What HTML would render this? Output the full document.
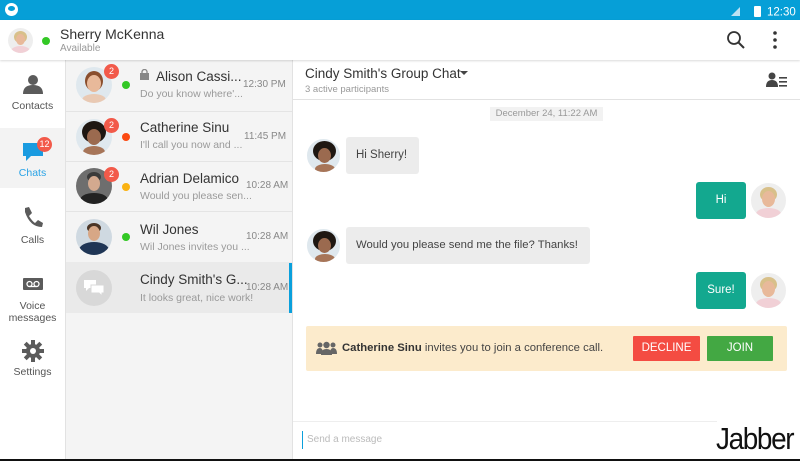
<!DOCTYPE html>
<html><head><meta charset="utf-8"><style>
*{margin:0;padding:0;box-sizing:border-box}
body{width:800px;height:461px;overflow:hidden;background:#fff;font-family:"Liberation Sans",sans-serif;position:relative;color:#333}
.a{position:absolute}
.t{position:absolute;white-space:nowrap}
.av{position:absolute;border-radius:50%;overflow:hidden;background:#dfe8ee}
.av .hair{position:absolute;border-radius:50%}
.av .face{position:absolute;border-radius:50%;background:#e8b99a}
.av .body{position:absolute;border-radius:50% 50% 0 0}
.badge{position:absolute;width:15px;height:15px;border-radius:50%;background:#f25a4a;color:#fff;font-size:9px;text-align:center;line-height:15px}
.dot{position:absolute;width:8px;height:8px;border-radius:50%}
.nm{font-size:13.5px;color:#333}
.pv{font-size:10.5px;color:#9a9a9a}
.tm{font-size:10px;color:#888}
.nav{position:absolute;left:0;width:65px;text-align:center;font-size:10.5px;color:#555}
</style></head><body>
<div class="a" style="left:0;top:0;width:800px;height:20px;background:#069fd7"></div>
<div class="a" style="left:5px;top:3px;width:13px;height:13px;border-radius:50%;background:#fff"></div>
<div class="a" style="left:8px;top:6px;width:7px;height:5px;border-radius:50%;background:#069fd7"></div>
<svg class="a" style="left:730px;top:4px" width="70" height="14"><polygon points="1,12 10,3 10,12" fill="#bde2f3"/><rect x="24" y="2" width="7" height="11" rx="1" fill="#fff"/><text x="37" y="11.5" font-size="11.5" fill="#fff" font-family="Liberation Sans">12:30</text></svg>
<div class="a" style="left:0;top:20px;width:800px;height:40px;background:#fff;box-shadow:0 1px 2px rgba(0,0,0,.15);z-index:2"></div>
<div style="z-index:3;position:absolute;left:0;top:0">
<div class="av" style="left:8px;top:28px;width:25px;height:25px;background:#eee"><div class="hair" style="left:6px;top:3px;width:13px;height:12px;background:#d8c08a"></div><div class="face" style="left:8px;top:6px;width:9px;height:11px"></div><div class="body" style="left:3px;top:18px;width:19px;height:10px;background:#f1d0d6"></div></div>
<div class="dot" style="left:42px;top:37px;background:#33c825"></div>
<div class="t" style="left:60px;top:26px;font-size:14px;color:#333">Sherry McKenna</div>
<div class="t" style="left:60px;top:43px;font-size:10px;color:#999">Available</div>
<svg class="a" style="left:725px;top:29px" width="60" height="22"><circle cx="9" cy="9" r="6" fill="none" stroke="#333" stroke-width="1.8"/><line x1="13.5" y1="13.5" x2="19" y2="19" stroke="#333" stroke-width="2"/><circle cx="50" cy="4" r="1.8" fill="#333"/><circle cx="50" cy="11" r="1.8" fill="#333"/><circle cx="50" cy="18" r="1.8" fill="#333"/></svg>
</div>
<div class="a" style="left:0;top:128px;width:65px;height:60px;background:#f3f3f3"></div>
<svg class="a" style="left:22px;top:74px" width="22" height="22"><circle cx="11" cy="6" r="5" fill="#5b5b5b"/><path d="M1 20 Q1 11 11 11 Q21 11 21 20Z" fill="#5b5b5b"/></svg>
<div class="nav" style="top:100px">Contacts</div>
<svg class="a" style="left:22px;top:141px" width="22" height="22"><path d="M1 2 H21 V15 H9 L4 20 V15 H1Z" fill="#1a9be0"/></svg>
<div class="badge" style="left:37px;top:137px">12</div>
<div class="nav" style="top:167px;color:#29a3e6">Chats</div>
<svg class="a" style="left:22px;top:206px" width="22" height="22"><path d="M3 2 L7 1 L10 7 L7 10 Q10 15 13 17 L16 14 L21 17 L20 21 Q8 21 3 6Z" fill="#5b5b5b"/></svg>
<div class="nav" style="top:234px">Calls</div>
<svg class="a" style="left:23px;top:278px" width="20" height="12"><rect width="20" height="12" rx="1" fill="#5b5b5b"/><circle cx="6.5" cy="6" r="2.5" fill="none" stroke="#fff" stroke-width="1.3"/><circle cx="13.5" cy="6" r="2.5" fill="none" stroke="#fff" stroke-width="1.3"/><line x1="6.5" y1="8.5" x2="13.5" y2="8.5" stroke="#fff" stroke-width="1.3"/></svg>
<div class="nav" style="top:300px;line-height:12px">Voice<br>messages</div>
<svg class="a" style="left:22px;top:340px" width="22" height="22"><g fill="#5b5b5b" transform="translate(11 11)"><rect x="-2" y="-11" width="4" height="22"/><rect x="-2" y="-11" width="4" height="22" transform="rotate(45)"/><rect x="-2" y="-11" width="4" height="22" transform="rotate(90)"/><rect x="-2" y="-11" width="4" height="22" transform="rotate(135)"/><circle r="7"/><circle r="3" fill="#fff"/></g></svg>
<div class="nav" style="top:366px">Settings</div>
<div class="a" style="left:65px;top:60px;width:228px;height:401px;background:#f4f4f4;border-left:1px solid #e2e2e2;border-right:1px solid #e2e2e2"></div>
<div class="a" style="left:66px;top:111px;width:226px;height:1px;background:#e4e4e4"></div>
<div class="a" style="left:66px;top:161px;width:226px;height:1px;background:#e4e4e4"></div>
<div class="a" style="left:66px;top:211px;width:226px;height:1px;background:#e4e4e4"></div>
<div class="a" style="left:66px;top:262px;width:226px;height:51px;background:#eaeaea"></div>
<div class="a" style="left:289px;top:263px;width:3px;height:50px;background:#0aa0dc"></div>
<div class="av" style="left:76px;top:67px;width:36px;height:36px"><div class="hair" style="left:9px;top:4px;width:18px;height:20px;background:#8a4f2e"></div><div class="face" style="left:11px;top:8px;width:14px;height:17px"></div><div class="body" style="left:6px;top:27px;width:24px;height:12px;background:#e9c9b3"></div></div>
<div class="badge" style="left:104px;top:64px">2</div><div class="dot" style="left:122px;top:81px;background:#33c825"></div>
<svg class="a" style="left:140px;top:69px" width="10" height="11"><rect x="0" y="4" width="9" height="7" fill="#888"/><path d="M2 5V3a2.5 2.5 0 015 0v2" fill="none" stroke="#888" stroke-width="1.3"/></svg>
<div class="t nm" style="left:156px;top:69px">Alison Cassi...</div><div class="t pv" style="left:140px;top:88px">Do you know where'...</div><div class="t tm" style="left:243px;top:79px">12:30 PM</div>
<div class="av" style="left:76px;top:119px;width:36px;height:36px"><div class="hair" style="left:6px;top:2px;width:24px;height:22px;background:#1e1712"></div><div class="face" style="left:11px;top:10px;width:14px;height:16px;background:#9b6a4f"></div><div class="body" style="left:7px;top:27px;width:22px;height:12px;background:#a77558"></div></div>
<div class="badge" style="left:104px;top:118px">2</div><div class="dot" style="left:122px;top:133px;background:#fb4a12"></div>
<div class="t nm" style="left:140px;top:120px">Catherine Sinu</div><div class="t pv" style="left:140px;top:139px">I'll call you now and ...</div><div class="t tm" style="left:244px;top:131px">11:45 PM</div>
<div class="av" style="left:76px;top:168px;width:36px;height:36px;background:#6e6e6e"><div class="hair" style="left:11px;top:4px;width:14px;height:10px;background:#3a3a3a"></div><div class="face" style="left:12px;top:8px;width:12px;height:15px;background:#d3a98f"></div><div class="body" style="left:4px;top:25px;width:28px;height:14px;background:#222"></div></div>
<div class="badge" style="left:104px;top:167px">2</div><div class="dot" style="left:122px;top:183px;background:#fab212"></div>
<div class="t nm" style="left:140px;top:171px">Adrian Delamico</div><div class="t pv" style="left:140px;top:190px">Would you please sen...</div><div class="t tm" style="left:246px;top:180px">10:28 AM</div>
<div class="av" style="left:76px;top:219px;width:36px;height:36px;background:#cfd9e1"><div class="hair" style="left:11px;top:4px;width:14px;height:10px;background:#4a3526"></div><div class="face" style="left:12px;top:7px;width:12px;height:15px;background:#d7a786"></div><div class="body" style="left:3px;top:23px;width:30px;height:16px;background:#1f3555"></div></div>
<div class="dot" style="left:122px;top:233px;background:#33c825"></div>
<div class="t nm" style="left:140px;top:222px">Wil Jones</div><div class="t pv" style="left:140px;top:241px">Wil Jones invites you ...</div><div class="t tm" style="left:246px;top:231px">10:28 AM</div>
<div class="a" style="left:76px;top:270px;width:36px;height:36px;border-radius:50%;background:#d8d8d8"></div>
<svg class="a" style="left:83px;top:279px" width="22" height="18"><path d="M1 1H13V9H6L3 12V9H1Z" fill="#fff"/><path d="M8 6H21V14H19V17L16 14H8Z" fill="#fff" stroke="#d8d8d8" stroke-width="1"/></svg>
<div class="t nm" style="left:140px;top:272px">Cindy Smith's G...</div><div class="t pv" style="left:140px;top:292px">It looks great, nice work!</div><div class="t tm" style="left:246px;top:282px">10:28 AM</div>
<div class="t" style="left:305px;top:66px;font-size:13.5px;color:#333">Cindy Smith's Group Chat</div>
<svg class="a" style="left:460px;top:71px" width="9" height="5"><path d="M0 0H8L4 4Z" fill="#444"/></svg>
<div class="t" style="left:305px;top:84px;font-size:9.5px;color:#999">3 active participants</div>
<svg class="a" style="left:766px;top:72px" width="22" height="16"><circle cx="6" cy="4" r="3.5" fill="#444"/><path d="M0 15Q0 8 6 8Q12 8 12 15Z" fill="#444"/><rect x="13" y="5" width="8" height="1.6" fill="#444"/><rect x="13" y="9" width="8" height="1.6" fill="#444"/><rect x="13" y="13" width="8" height="1.6" fill="#444"/></svg>
<div class="a" style="left:293px;top:99px;width:507px;height:1px;background:#e2e2e2"></div>
<div class="t" style="left:490px;top:107px;width:113px;height:14px;background:#f2f2f2;font-size:9.5px;color:#999;text-align:center;line-height:14px">December 24, 11:22 AM</div>
<div class="a" style="left:346px;top:137px;width:73px;height:37px;background:#ececec;border-radius:3px"></div>
<div class="t" style="left:356px;top:149px;font-size:11.5px;color:#444">Hi Sherry!</div>
<div class="av" style="left:305px;top:137px;width:37px;height:37px;border:2px solid #fff"><div class="hair" style="left:6px;top:2px;width:23px;height:20px;background:#1e1712"></div><div class="face" style="left:11px;top:9px;width:13px;height:15px;background:#9b6a4f"></div><div class="body" style="left:8px;top:25px;width:20px;height:10px;background:#a77558"></div></div>
<div class="a" style="left:696px;top:182px;width:50px;height:37px;background:#13a88f;border-radius:3px"></div>
<div class="t" style="left:696px;top:194px;width:50px;text-align:center;font-size:11.5px;color:#fff">Hi</div>
<div class="av" style="left:749px;top:181px;width:39px;height:39px;border:2px solid #fff;background:#eee"><div class="hair" style="left:9px;top:4px;width:17px;height:15px;background:#d8c08a"></div><div class="face" style="left:11px;top:8px;width:13px;height:16px"></div><div class="body" style="left:5px;top:25px;width:25px;height:12px;background:#f1d0d6"></div></div>
<div class="a" style="left:346px;top:227px;width:244px;height:37px;background:#ececec;border-radius:3px"></div>
<div class="t" style="left:356px;top:239px;font-size:11.3px;color:#444">Would you please send me the file? Thanks!</div>
<div class="av" style="left:305px;top:227px;width:37px;height:37px;border:2px solid #fff"><div class="hair" style="left:6px;top:2px;width:23px;height:20px;background:#1e1712"></div><div class="face" style="left:11px;top:9px;width:13px;height:15px;background:#9b6a4f"></div><div class="body" style="left:8px;top:25px;width:20px;height:10px;background:#a77558"></div></div>
<div class="a" style="left:696px;top:272px;width:50px;height:37px;background:#13a88f;border-radius:3px"></div>
<div class="t" style="left:696px;top:284px;width:50px;text-align:center;font-size:11.5px;color:#fff">Sure!</div>
<div class="av" style="left:749px;top:271px;width:39px;height:39px;border:2px solid #fff;background:#eee"><div class="hair" style="left:9px;top:4px;width:17px;height:15px;background:#d8c08a"></div><div class="face" style="left:11px;top:8px;width:13px;height:16px"></div><div class="body" style="left:5px;top:25px;width:25px;height:12px;background:#f1d0d6"></div></div>
<div class="a" style="left:306px;top:326px;width:481px;height:45px;background:#fcebcc;border-radius:2px"></div>
<svg class="a" style="left:316px;top:341px" width="21" height="14"><circle cx="4" cy="4" r="2.5" fill="#666"/><circle cx="17" cy="4" r="2.5" fill="#666"/><circle cx="10.5" cy="4" r="3.2" fill="#666"/><path d="M0 13Q0 7 4 7Q7 7 7 13Z" fill="#666"/><path d="M14 13Q14 7 17 7Q21 7 21 13Z" fill="#666"/><path d="M5 14Q5 8 10.5 8Q16 8 16 14Z" fill="#666"/></svg>
<div class="t" style="left:342px;top:342px;font-size:11.3px;color:#444"><b style="color:#333">Catherine Sinu</b> invites you to join a conference call.</div>
<div class="a" style="left:633px;top:336px;width:67px;height:25px;background:#f44c42;color:#fff;font-size:11.5px;text-align:center;line-height:25px;border-radius:1px">DECLINE</div>
<div class="a" style="left:707px;top:336px;width:66px;height:25px;background:#43a843;color:#fff;font-size:11.5px;text-align:center;line-height:25px;border-radius:1px">JOIN</div>
<div class="a" style="left:293px;top:421px;width:424px;height:1px;background:#eee"></div>
<div class="a" style="left:302px;top:431px;width:1px;height:18px;background:#0aa0dc"></div>
<div class="t" style="left:307px;top:434px;font-size:10px;color:#bbb">Send a message</div>
<div class="t" style="left:716px;top:421px;font-size:31px;color:#111;letter-spacing:-1.5px;transform:scaleX(0.9);transform-origin:left">Jabber</div>
<div class="a" style="left:0;top:459px;width:800px;height:2px;background:#111"></div>
</body></html>
